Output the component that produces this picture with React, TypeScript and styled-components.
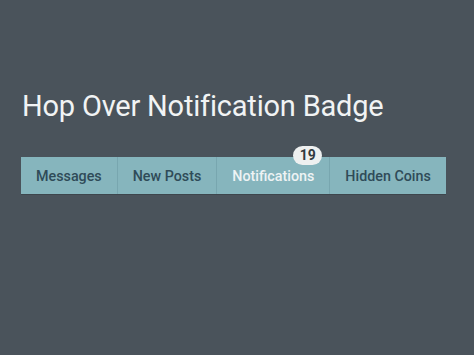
import styled, { createGlobalStyle } from "styled-components";

const GlobalStyle = createGlobalStyle`
  html, body {
    margin: 0;
    padding: 0;
    background: #4a535b;
    font-family: Roboto, "Liberation Sans", sans-serif;
  }
`;

const Page = styled.div`
  width: 474px;
  height: 355px;
  padding: 86px 0 0 21px;
  box-sizing: border-box;
`;

const Title = styled.h1`
  margin: 0 0 31px 1px;
  font-size: 29px;
  font-weight: 400;
  line-height: 40px;
  color: #f1f3f4;
  letter-spacing: -0.2px;
`;

const Nav = styled.nav`
  display: inline-flex;
  background: #86b5bd;
  box-shadow: 0 1px 0 #3e464d;
`;

const Tab = styled.a<{ $active?: boolean; $last?: boolean }>`
  position: relative;
  display: flex;
  align-items: center;
  height: 37px;
  padding: 0 15px;
  font-size: 14.3px;
  font-weight: 500;
  color: ${(p) => (p.$active ? "#eef3f4" : "#2f4b58")};
  border-right: ${(p) => (p.$last ? "none" : "1px solid #78a6af")};
  cursor: pointer;
`;

const Badge = styled.span`
  position: absolute;
  top: -11px;
  right: 7px;
  min-width: 29px;
  height: 19px;
  padding: 0 4px;
  box-sizing: border-box;
  border-radius: 10px;
  background: #eef0f0;
  color: #333a3f;
  font-size: 14px;
  font-weight: 700;
  line-height: 19px;
  text-align: center;
`;

export default function App() {
  return (
    <>
      <GlobalStyle />
      <Page>
        <Title>Hop Over Notification Badge</Title>
        <Nav>
          <Tab>Messages</Tab>
          <Tab>New Posts</Tab>
          <Tab $active>
            Notifications
            <Badge>19</Badge>
          </Tab>
          <Tab $last>Hidden Coins</Tab>
        </Nav>
      </Page>
    </>
  );
}
